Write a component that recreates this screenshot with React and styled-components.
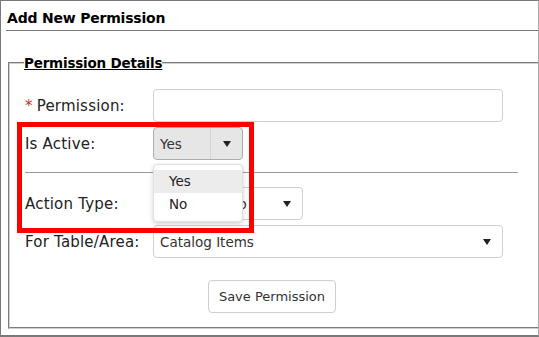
import React from 'react';
import styled, { createGlobalStyle } from 'styled-components';

const GlobalStyle = createGlobalStyle`
   html, body { margin:0; padding:0; background:#fff; }
   * { box-sizing:border-box; }
`;

const Page = styled.div`
   position:relative;
   width:539px;
   height:337px;
   border:1px solid #7a7a7a;
   border-right-color:#a8a8a8;
   border-bottom:2px solid #7a7a7a;
   background:#fff;
   font-family:"DejaVu Sans", Verdana, sans-serif;
   color:#222;
   overflow:hidden;
`;

const Header = styled.div`
   margin-left:5px;
   height:30px;
   padding:9px 0 0 1px;
   border-bottom:1px solid #7a7a7a;
   font-weight:bold;
   font-size:14px;
   letter-spacing:-0.2px;
   color:#000;
`;

const Fieldset = styled.fieldset`
   margin:24px 3px 0 7px;
   padding:8px 30px 0 15px;
   height:274px;
   border:2px groove #d0d0d0;
`;

const Legend = styled.legend`
   padding:0;
   margin-left:-1px;
   font-weight:bold;
   font-size:13.5px;
   letter-spacing:-0.2px;
   text-decoration:underline;
   color:#000;
`;

const Row = styled.div`
   display:grid;
   grid-template-columns:128px 1fr;
   align-items:center;
   margin-top:${p => p.$gap || 5}px;
`;

const Label = styled.label`
   font-size:15px;
   color:#222;
   letter-spacing:0.2px;
`;

const Star = styled.span`
   color:#c0392b;
   margin-right:4px;
`;

const Input = styled.div`
   width:${p => p.$width}px;
   height:33px;
   border:1px solid #cfcfcf;
   border-radius:4px;
   background:#fff;
`;

const SelectBox = styled.div`
   position:relative;
   display:flex;
   align-items:center;
   width:${p => p.$width}px;
   height:33px;
   padding-left:6px;
   border:1px solid ${p => (p.$open ? '#adadad' : '#cfcfcf')};
   border-radius:4px;
   background:${p => (p.$open ? '#e6e6e6' : '#fff')};
   font-size:13.5px;
   color:#333;
   white-space:nowrap;
`;

const SelectText = styled.span`
   flex:1;
   overflow:hidden;
`;

const Caret = styled.span`
   display:flex;
   align-items:center;
   justify-content:center;
   width:32px;
   height:100%;
   border-left:1px solid ${p => (p.$split ? '#d4d4d4' : 'transparent')};
   &::after {
      content:'';
      border-left:4px solid transparent;
      border-right:4px solid transparent;
      border-top:6px solid #222;
   }
`;

const Menu = styled.div`
   position:absolute;
   left:-1px;
   top:36px;
   width:90px;
   padding:5px 0;
   background:#fff;
   border:1px solid #e0e0e0;
   border-radius:4px;
   box-shadow:0 2px 5px rgba(0,0,0,0.18);
   z-index:2;
`;

const MenuItem = styled.div`
   height:23px;
   line-height:23px;
   padding-left:15px;
   font-size:13.5px;
   color:#222;
   background:${p => (p.$active ? '#ececec' : 'transparent')};
`;

const Divider = styled.hr`
   margin:12px 0 0 0;
   width:493px;
   border:none;
   border-top:1px solid #9a9a9a;
`;

const ButtonRow = styled.div`
   display:flex;
   padding-left:183px;
   margin-top:22px;
`;

const Button = styled.button`
   width:128px;
   height:33px;
   padding:0;
   border:1px solid #cfcfcf;
   border-radius:4px;
   background:#fff;
   font-family:"DejaVu Sans", Verdana, sans-serif;
   font-size:13px;
   color:#333;
`;

const Highlight = styled.div`
   position:absolute;
   left:16px;
   top:121px;
   width:237px;
   height:111px;
   border:5px solid #ff0000;
   pointer-events:none;
   z-index:3;
`;

export default function App() {
   return (
      <Page>
         <GlobalStyle />
         <Header>Add New Permission</Header>
         <Fieldset>
            <Legend>Permission Details</Legend>
            <Row $gap={10}>
               <Label><Star>*</Star>Permission:</Label>
               <Input $width={350} />
            </Row>
            <Row>
               <Label>Is Active:</Label>
               <SelectBox $width={90} $open>
                  <SelectText>Yes</SelectText>
                  <Caret $split />
                  <Menu>
                     <MenuItem $active>Yes</MenuItem>
                     <MenuItem>No</MenuItem>
                  </Menu>
               </SelectBox>
            </Row>
            <Divider />
            <Row $gap={14}>
               <Label>Action Type:</Label>
               <SelectBox $width={150}>
                  <SelectText>Add/Edit Info</SelectText>
                  <Caret />
               </SelectBox>
            </Row>
            <Row>
               <Label>For Table/Area:</Label>
               <SelectBox $width={350}>
                  <SelectText>Catalog Items</SelectText>
                  <Caret />
               </SelectBox>
            </Row>
            <ButtonRow>
               <Button>Save Permission</Button>
            </ButtonRow>
         </Fieldset>
         <Highlight />
      </Page>
   );
}
